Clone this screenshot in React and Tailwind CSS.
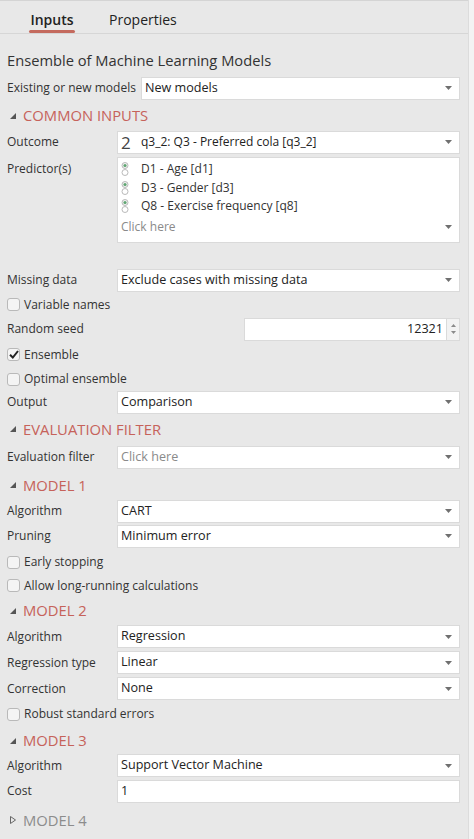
import React from "react";

const Caret = () => (
  <svg width="7" height="4" viewBox="0 0 7 4" className="shrink-0">
    <path d="M0 0 L7 0 L3.5 4 Z" fill="#707070" />
  </svg>
);

const Dropdown = ({ value, placeholder, left = "ml-[110px]" }) => (
  <div className={`${left} flex-1 h-[23px] bg-white border border-[#dadada] flex items-center pl-[3px] pr-[7px]`}>
    <span className={`flex-1 truncate text-[12.6px] ${placeholder ? "text-[#8a8a8a]" : "text-[#222]"}`}>
      {value}
    </span>
    <Caret />
  </div>
);

const Row = ({ h, label, children }) => (
  <div className={`${h} flex items-center`}>
    <span className="text-[12px] text-[#333] whitespace-nowrap w-0">{label}</span>
    {children}
  </div>
);

const Check = ({ h, label, checked }) => (
  <div className={`${h} flex items-center gap-[4px]`}>
    <div className="w-[13px] h-[13px] rounded-[3px] border border-[#b9b9b9] bg-[#f4f4f4] flex items-center justify-center">
      {checked && (
        <svg width="10" height="9" viewBox="0 0 10 9">
          <path d="M1 4.8 L3.8 7.5 L9 1" stroke="#222" strokeWidth="2" fill="none" />
        </svg>
      )}
    </div>
    <span className="text-[12px] text-[#333]">{label}</span>
  </div>
);

const Header = ({ h, label, open = true }) => (
  <div className={`${h} flex items-center gap-[7px] pl-[3px]`}>
    {open ? (
      <svg width="6" height="6" viewBox="0 0 6 6">
        <path d="M6 0 L6 6 L0 6 Z" fill="#555" />
      </svg>
    ) : (
      <svg width="6" height="8" viewBox="0 0 6 8">
        <path d="M0.5 0.5 L5.5 4 L0.5 7.5 Z" fill="none" stroke="#666" strokeWidth="1" />
      </svg>
    )}
    <span className={`text-[14.8px] ${open ? "text-[#c6625a]" : "text-[#8c8c8c]"}`}>{label}</span>
  </div>
);

const VarIcon = () => (
  <svg width="8" height="14" viewBox="0 0 8 14" className="shrink-0">
    <circle cx="4" cy="3.5" r="3" fill="#f4f4f4" stroke="#a8a8a8" strokeWidth="0.8" />
    <circle cx="4" cy="3.5" r="1.6" fill="#5fa572" />
    <circle cx="4" cy="10.5" r="3" fill="#fff" stroke="#a8a8a8" strokeWidth="0.8" />
  </svg>
);

const predictors = ["D1 - Age [d1]", "D3 - Gender [d3]", "Q8 - Exercise frequency [q8]"];

export default function App() {
  return (
    <div className="w-[474px] h-[839px] overflow-hidden bg-[#e8e8e8] flex" style={{ fontFamily: '"Open Sans", "Noto Sans", sans-serif' }}>
      <div className="w-[468px] flex flex-col">
        {/* tabs */}
        <div className="h-[34px] border-t border-[#d4d4d4] border-b border-b-[#d6d6d6] flex items-end gap-[34px] pl-[29px]">
          <div className="flex flex-col items-center">
            <span className="text-[14px] font-semibold text-[#222] leading-[20px]">Inputs</span>
            <div className="h-[3px] w-[46px] bg-[#c46a5e] rounded-full" />
          </div>
          <span className="text-[14px] text-[#222] leading-[20px] mb-[3px]">Properties</span>
        </div>

        <div className="pl-[7px] pr-[8px] flex flex-col">
          <div className="h-[12px]" />
          <div className="h-[28px] flex items-center text-[14.7px] text-[#333]">Ensemble of Machine Learning Models</div>

          <Row h="h-[28px]" label="Existing or new models">
            <Dropdown value="New models" left="ml-[134px]" />
          </Row>

          <Header h="h-[27px]" label="COMMON INPUTS" />

          <Row h="h-[26px]" label="Outcome">
            <div className="ml-[110px] flex-1 h-[23px] bg-white border border-[#dadada] flex items-center pl-[3px] pr-[7px]">
              <span className="text-[17px] text-[#444] leading-none w-[20px]">2</span>
              <span className="flex-1 text-[12px] text-[#222]">q3_2: Q3 - Preferred cola [q3_2]</span>
              <Caret />
            </div>
          </Row>

          <div className="h-[113px] flex items-start">
            <span className="text-[12px] text-[#333] whitespace-nowrap w-0 mt-[5px]">Predictor(s)</span>
            <div className="ml-[110px] mt-[2px] flex-1 h-[86px] bg-white border border-[#dadada] flex flex-col pl-[3px] pr-[7px] pt-[2px]">
              {predictors.map((p) => (
                <div key={p} className="h-[18.5px] flex items-center gap-[12px]">
                  <VarIcon />
                  <span className="text-[12px] text-[#333]">{p}</span>
                </div>
              ))}
              <div className="h-[22px] flex items-center">
                <span className="flex-1 text-[12px] text-[#8a8a8a]">Click here</span>
                <Caret />
              </div>
            </div>
          </div>

          <Row h="h-[24px]" label="Missing data">
            <Dropdown value="Exclude cases with missing data" />
          </Row>

          <Check h="h-[25px]" label="Variable names" />

          <Row h="h-[24px]" label="Random seed">
            <div className="ml-[237px] flex-1 h-[23px] flex">
              <div className="flex-1 bg-white border border-[#dadada] flex items-center justify-end pr-[3px] text-[12.6px] text-[#222]">12321</div>
              <div className="w-[13px] bg-[#f2f2f2] border border-l-0 border-[#dadada] flex flex-col items-center justify-center gap-[4px]">
                <svg width="5" height="3" viewBox="0 0 5 3"><path d="M0 3 L5 3 L2.5 0 Z" fill="#8a8a8a" /></svg>
                <svg width="5" height="3" viewBox="0 0 5 3"><path d="M0 0 L5 0 L2.5 3 Z" fill="#8a8a8a" /></svg>
              </div>
            </div>
          </Row>

          <Check h="h-[27px]" label="Ensemble" checked />
          <Check h="h-[22px]" label="Optimal ensemble" />

          <Row h="h-[24px]" label="Output">
            <Dropdown value="Comparison" />
          </Row>

          <Header h="h-[30px]" label="EVALUATION FILTER" />

          <Row h="h-[26px]" label="Evaluation filter">
            <Dropdown value="Click here" placeholder />
          </Row>

          <Header h="h-[30px]" label="MODEL 1" />

          <Row h="h-[22px]" label="Algorithm">
            <Dropdown value="CART" />
          </Row>
          <Row h="h-[28px]" label="Pruning">
            <Dropdown value="Minimum error" />
          </Row>

          <Check h="h-[24px]" label="Early stopping" />
          <Check h="h-[23px]" label="Allow long-running calculations" />

          <Header h="h-[27px]" label="MODEL 2" />

          <Row h="h-[25px]" label="Algorithm">
            <Dropdown value="Regression" />
          </Row>
          <Row h="h-[27px]" label="Regression type">
            <Dropdown value="Linear" />
          </Row>
          <Row h="h-[25px]" label="Correction">
            <Dropdown value="None" />
          </Row>

          <Check h="h-[26px]" label="Robust standard errors" />

          <Header h="h-[27px]" label="MODEL 3" />

          <Row h="h-[23px]" label="Algorithm">
            <Dropdown value="Support Vector Machine" />
          </Row>
          <Row h="h-[28px]" label="Cost">
            <div className="ml-[110px] flex-1 h-[23px] bg-white border border-[#dadada] flex items-center pl-[3px] text-[12.6px] text-[#222]">1</div>
          </Row>

          <Header h="h-[30px]" label="MODEL 4" open={false} />
        </div>
      </div>
      <div className="w-[6px] bg-[#f3f3f3] border-l border-[#dcdcdc]" />
    </div>
  );
}
